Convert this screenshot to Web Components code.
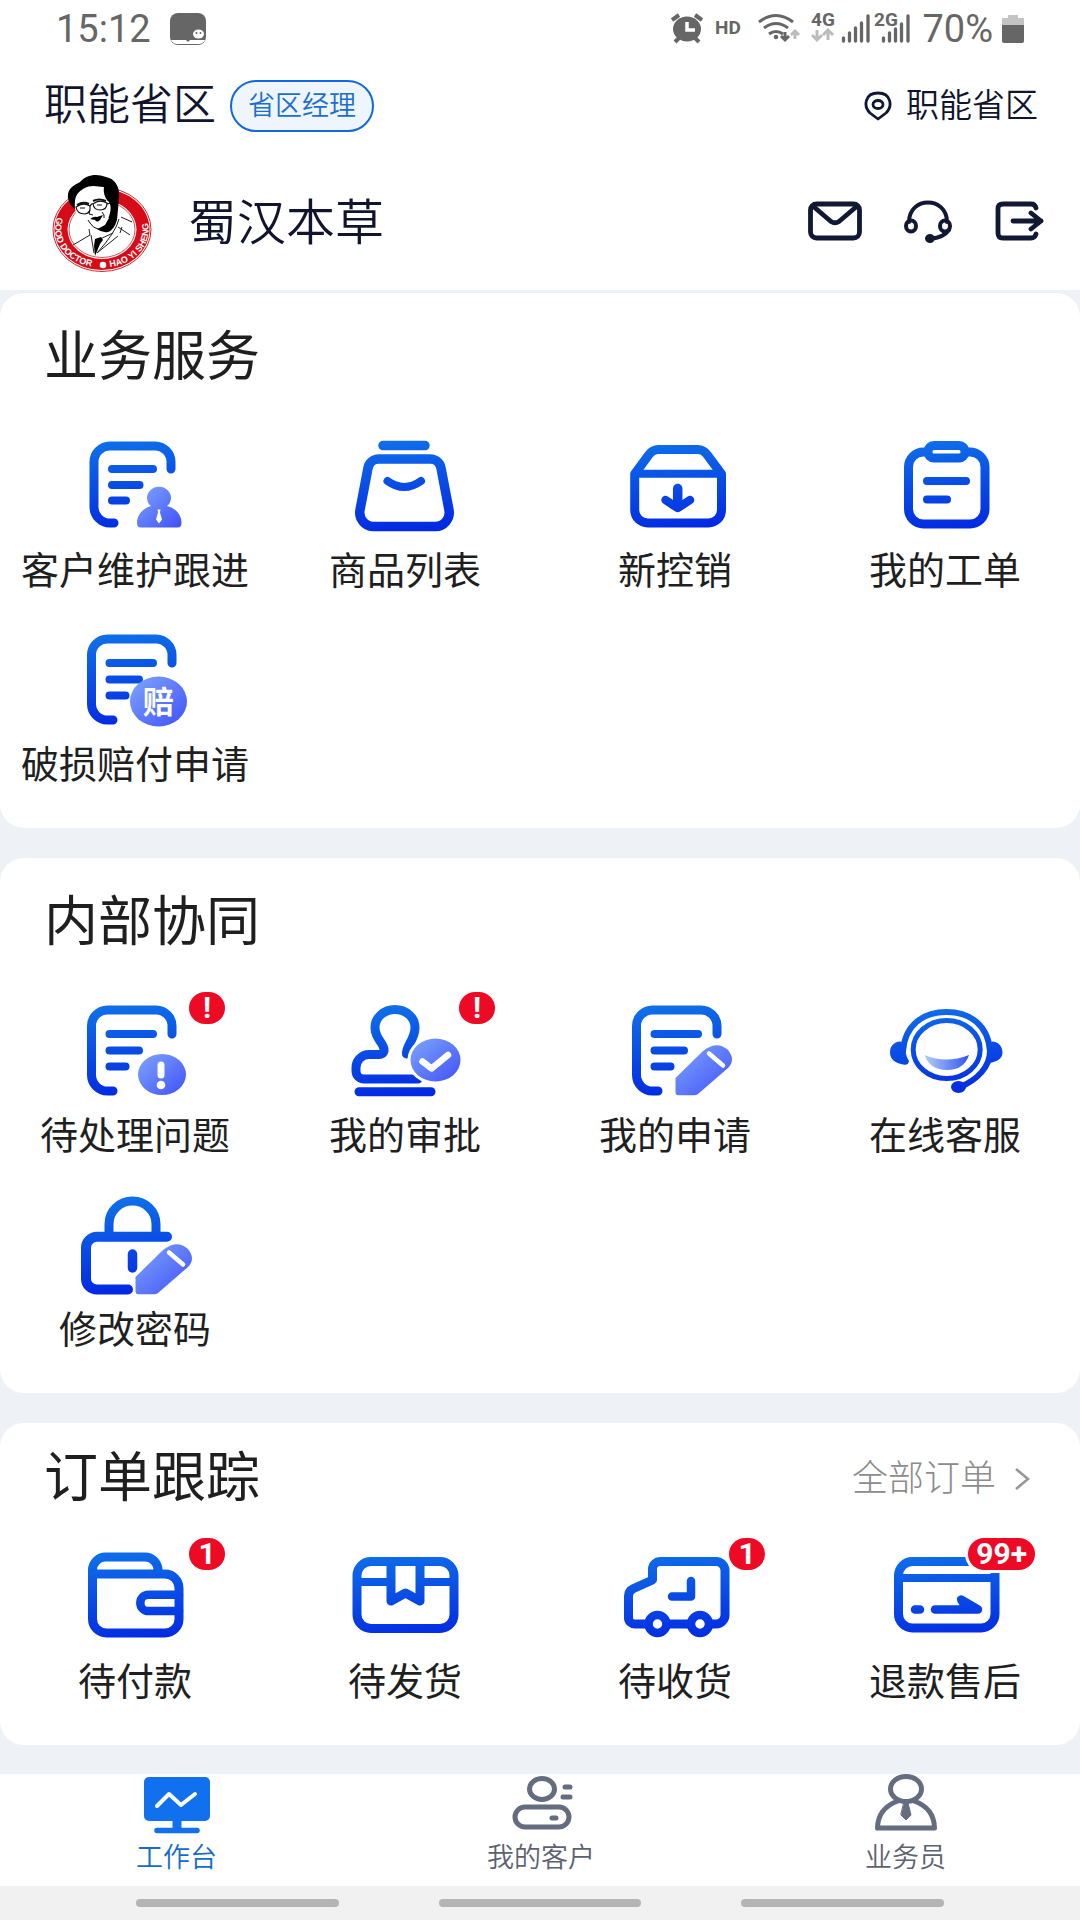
<!DOCTYPE html>
<html lang="zh-CN">
<head>
<meta charset="utf-8">
<meta name="viewport" content="width=device-width, initial-scale=1">
<title>工作台</title>
<style>
  body {
    margin: 0;
    min-height: 100vh;
    display: flex;
    flex-direction: column;
    background: #eef2f6;
    color: #1f1f1f;
    font-family: Roboto, "Noto Sans CJK SC", sans-serif;
  }
  main {
    flex-grow: 1;
    display: flex;
    flex-direction: column;
    gap: 30px;
    padding: 3px 0 29px;
  }
</style>
</head>
<body>
<status-bar></status-bar>
<page-header region="职能省区" role-name="省区经理" company="蜀汉本草"></page-header>
<main>
  <service-card heading="业务服务">
    <service-item icon="customer" label="客户维护跟进"></service-item>
    <service-item icon="bag" label="商品列表"></service-item>
    <service-item icon="box" label="新控销"></service-item>
    <service-item icon="clipboard" label="我的工单"></service-item>
    <service-item icon="damage" label="破损赔付申请"></service-item>
  </service-card>
  <service-card heading="内部协同">
    <service-item icon="issue" label="待处理问题" badge="!"></service-item>
    <service-item icon="stamp" label="我的审批" badge="!"></service-item>
    <service-item icon="apply" label="我的申请"></service-item>
    <service-item icon="service" label="在线客服"></service-item>
    <service-item icon="lock" label="修改密码"></service-item>
  </service-card>
  <service-card heading="订单跟踪" more="全部订单" compact>
    <service-item icon="wallet" label="待付款" badge="1"></service-item>
    <service-item icon="parcel" label="待发货"></service-item>
    <service-item icon="truck" label="待收货" badge="1"></service-item>
    <service-item icon="refund" label="退款售后" badge="99+"></service-item>
  </service-card>
</main>
<tab-bar>
  <tab-item icon="desk" label="工作台" active></tab-item>
  <tab-item icon="clients" label="我的客户"></tab-item>
  <tab-item icon="agent" label="业务员"></tab-item>
</tab-bar>
<gesture-bar></gesture-bar>

<script>
// the sheet of paper shared by several icons
const SHEET = `
  <path d="M97 33v-8a16 16 0 0 0-16-16H32.500a16 16 0 0 0-16 16v49a16 16 0 0 0 16 16H38" stroke-width="9"/>
  <path d="M34.500 33H78M34.500 49.500H64M34.500 65.500H50.500" stroke-width="8"/>`;

const PENCIL = `
  <path class="soft" d="M60.500 82 88 55Q102 44 113 54q8 10 0 18L83 98q-1.500 1.200-4 1.200H63.500q-3 0-3-3z"/>
  <path class="light" d="M94 57.500 108 69.500" stroke-width="4.500"/>`;

const ICONS = {
  customer: `
    <path d="M96 33v-7a16 16 0 0 0-16-16H35a16 16 0 0 0-16 16v45a16 16 0 0 0 16 16h4" stroke-width="9"/>
    <path d="M37 33H78M37 49H64.500M37 64.500H51" stroke-width="8"/>
    <path class="soft" d="M62 87c0-9 7-15 14-17a12 11 0 1 1 16 0c8 2 14.500 8 14.500 17q0 4.500-4 4.500H66q-4 0-4-4.500z"/>
    <path d="M82.500 73.500h3l-.5 3 2 7-3 4-3-4 2-7z" fill="#fff" stroke="none"/>`,
  bag: `
    <path d="M38 9.600H80" stroke-width="9.500"/>
    <path d="M34 23H85a11 11 0 0 1 11 9l8 42a14 14 0 0 1-14 16.500H28A14 14 0 0 1 15 74l8-42a11 11 0 0 1 11-9z" stroke-width="9.500"/>
    <path d="M42.500 45Q59 57 76 45" stroke-width="8"/>`,
  box: `
    <path d="M19.700 38V74a13 13 0 0 0 13 13H93.500a13 13 0 0 0 13-13V38L92 18.500q-4-5-9-5H43q-5 0-9 5z" stroke-width="9"/>
    <path d="M20 37.800H106" stroke-width="8"/>
    <path d="M62.700 52.500V70" stroke-width="9.500"/>
    <path d="M50.500 64 62.700 72 75 64" stroke-width="8.500"/>`,
  clipboard: `
    <rect x="23.500" y="16" width="76.500" height="72" rx="15" stroke-width="9"/>
    <rect x="43" y="9.500" width="37" height="12.500" rx="6" fill="#fff" stroke-width="9"/>
    <path d="M42 45H81M42 63.500H62" stroke-width="8"/>`,
  damage: `${SHEET}
    <ellipse class="soft" cx="83.500" cy="71.500" rx="28.500" ry="25"/>
    <text x="83.500" y="83" text-anchor="middle">赔</text>`,
  issue: `${SHEET}
    <ellipse class="soft" cx="87" cy="73.500" rx="24" ry="20.500"/>
    <path class="light" d="M86 64V74" stroke-width="7"/>
    <circle cx="86" cy="84" r="4.300" fill="#fff" stroke="none"/>`,
  stamp: `
    <path d="M61.500 53C61 44 70 39 70 26.500A20 18 0 0 0 30 26.500C30 39 40 42 39 50q-1 3.500-5 3.500H24a13 13 0 0 0-13 13V70a8 8 0 0 0 8 8H73" stroke-width="9"/>
    <path d="M14 90.700H86" stroke-width="9"/>
    <ellipse cx="90.500" cy="59" rx="28" ry="24.500" fill="#fff" stroke="none"/>
    <ellipse class="soft" cx="90.500" cy="59" rx="25" ry="21.500"/>
    <path class="light" d="M77.500 60.500 86.500 67.500 103 54" stroke-width="6.500"/>`,
  apply: `<g transform="translate(5 0)">${SHEET}</g><g transform="translate(0 -5)">${PENCIL}</g>`,
  service: `
    <ellipse cx="61.700" cy="48.500" rx="33.500" ry="29" stroke-width="5"/>
    <path d="M18 50C20 24 38 11 61.500 11S103 24 105 50C105 66 92 79 75 86" stroke-width="6"/>
    <path class="solid" d="M15 40.500 21 42Q19 53 24 60q-1 5-6 3.500C10 62 5 58 5 51.500S9 41 15 40.500zM108 40.500 102 42v20l5-.5C113 60 117.500 57 117.500 51.500S114 41 108 40.500z"/>
    <ellipse class="solid" cx="73.500" cy="86" rx="7.500" ry="6"/>
    <path class="smile" d="M39.500 54Q61 63 84 54 79 69 62 69T39.500 54z"/>`,
  lock: `
    <path d="M34 38V29a23.500 23 0 0 1 47 0V38" stroke-width="9"/>
    <path d="M92 41.700H22a11 11 0 0 0-11 11V84a11 10.500 0 0 0 11 10.500H53" stroke-width="10"/>
    <path d="M57.500 59V73" stroke-width="9.500"/>${PENCIL}`,
  wallet: `
    <path d="M17.500 27V72a14 14 0 0 0 14 14H90a14 14 0 0 0 14-14V41a14 14 0 0 0-14-14H17.500V23A13 13 0 0 1 30.500 10H70a13 13 0 0 1 13 13v4" stroke-width="9"/>
    <path d="M104 47.700H73.500a8.200 8.200 0 0 0 0 16.400H104" stroke-width="8.500"/>`,
  parcel: `
    <rect x="12" y="14.500" width="97" height="67" rx="14" stroke-width="9"/>
    <path d="M12 35H45M76 35H109" stroke-width="8"/>
    <path d="M46 16V54L60.500 46 75 54V16" stroke-width="9"/>`,
  truck: `
    <path d="M25 77H20a6.500 6 0 0 1-6.500-6V49q0-5 5-7.500L37.500 33V22a8 7.500 0 0 1 8-7.500H101a9 9 0 0 1 9 9V68a9 9 0 0 1-9 9z" stroke-width="9"/>
    <path d="M76 34V49.500H57" stroke-width="8.500"/>
    <circle cx="42.500" cy="77" r="9" fill="#fff" stroke-width="8.500"/>
    <circle cx="85" cy="77" r="9" fill="#fff" stroke-width="8.500"/>`,
  refund: `
    <path d="M96 14.500H27.500a14 14 0 0 0-14 14V67a14 14 0 0 0 14 14H96a14 14 0 0 0 14-14V25" stroke-width="9" stroke-linecap="butt"/>
    <path d="M14 31H106" stroke-width="8"/>
    <path d="M30 62.500h5M50 62.500H93L76 52.500 82 62" stroke-width="8.500"/>`
};

class ServiceItem extends HTMLElement {
  constructor() {
    super();
    this.attachShadow({ mode: 'open' });
  }

  connectedCallback() {
    const badge = this.getAttribute('badge');
    this.shadowRoot.innerHTML = `
<style>
  :host {
    display: block;
  }
  a {
    display: flex;
    flex-direction: column;
    align-items: center;
    gap: 9px;
    color: inherit;
    text-decoration: none;
  }
  .icon {
    position: relative;
    width: 120px;
    height: 104px;
  }
  svg {
    display: block;
    fill: none;
    stroke: url(#line);
    stroke-linecap: round;
    stroke-linejoin: round;
  }
  .soft {
    fill: url(#soft);
    stroke: none;
  }
  .smile {
    fill: url(#smile);
    stroke: none;
  }
  .solid {
    fill: url(#line);
    stroke: none;
  }
  .light {
    stroke: #fff;
  }
  text {
    fill: #fff;
    stroke: none;
    font: 700 31px "Noto Sans CJK SC", sans-serif;
  }
  .badge {
    position: absolute;
    top: -9px;
    right: -30px;
    box-sizing: border-box;
    min-width: 36px;
    height: 32px;
    padding: 0 8px;
    border-radius: 16px;
    background: #ee0a24;
    color: #fff;
    font-size: 30px;
    font-weight: 700;
    line-height: 32px;
    text-align: center;
  }
  .wide {
    box-shadow: 0 0 0 3px #fff;
  }
  .label {
    font-size: 38px;
    line-height: 44px;
    white-space: nowrap;
  }
</style>
<a href="#">
  <span class="icon">
    <svg width="120" height="104" viewBox="0 0 120 104" aria-hidden="true">
      <defs>
        <linearGradient id="line" gradientUnits="userSpaceOnUse" x1="50" y1="4" x2="60" y2="94">
          <stop offset="0" stop-color="#0f6fe9"/>
          <stop offset="1" stop-color="#032ae2"/>
        </linearGradient>
        <linearGradient id="soft" x1="0" y1="0" x2="1" y2="1">
          <stop offset="0" stop-color="#7fa6fc"/>
          <stop offset="1" stop-color="#3f50f8"/>
        </linearGradient>
        <linearGradient id="smile" x1="0" y1="0" x2="1" y2="0">
          <stop offset="0" stop-color="#b4ccfb"/>
          <stop offset="1" stop-color="#3156f0"/>
        </linearGradient>
      </defs>
      ${ICONS[this.getAttribute('icon')]}
    </svg>
    ${badge ? `<span class="badge ${badge.length > 1 ? 'wide' : ''}">${badge}</span>` : ''}
  </span>
  <span class="label">${this.getAttribute('label')}</span>
</a>`;
  }
}
customElements.define('service-item', ServiceItem);

class ServiceCard extends HTMLElement {
  constructor() {
    super();
    this.attachShadow({ mode: 'open' });
  }

  connectedCallback() {
    const more = this.getAttribute('more');
    this.shadowRoot.innerHTML = `
<style>
  :host {
    display: block;
    padding: 33px 0 41px;
    border-radius: 24px;
    background: #fff;
  }
  :host([compact]) {
    padding-top: 24px;
  }
  header {
    display: flex;
    align-items: center;
    justify-content: space-between;
    padding: 0 48px 0 44px;
    margin-bottom: 46px;
  }
  :host([compact]) header {
    margin-bottom: 36px;
  }
  h2 {
    margin: 0;
    font-size: 54px;
    font-weight: inherit;
    line-height: 64px;
  }
  a {
    display: flex;
    align-items: center;
    gap: 16px;
    color: #8c8c8c;
    font-size: 36px;
    font-weight: 300;
    line-height: 44px;
    text-decoration: none;
  }
  .grid {
    display: grid;
    grid-template-columns: repeat(4, 1fr);
    row-gap: 37px;
  }
</style>
<header>
  <h2>${this.getAttribute('heading')}</h2>
  ${more ? `<a href="#">${more}
    <svg width="20" height="24" viewBox="0 0 20 24" fill="none" stroke="#969696" stroke-width="2.500" aria-hidden="true"><path d="M4 2 16 12 4 22"/></svg>
  </a>` : ''}
</header>
<div class="grid"><slot></slot></div>`;
  }
}
customElements.define('service-card', ServiceCard);

class StatusBar extends HTMLElement {
  constructor() {
    super();
    this.attachShadow({ mode: 'open' }).innerHTML = `
<style>
  :host {
    display: flex;
    align-items: center;
    height: 58px;
    padding: 0 56px;
    background: #fff;
    color: #666;
    font-size: 38px;
    line-height: 42px;
  }
  .app {
    margin-left: 18px;
    flex-grow: 1;
  }
  .level {
    margin: 0 9px 0 11px;
  }
  text {
    font: 700 19px Roboto, sans-serif;
  }
  svg {
    display: block;
  }
</style>
<span>15:12</span>
<span class="app">
  <svg width="38" height="34" viewBox="0 0 38 34" aria-hidden="true">
    <rect x="1" y="1" width="36" height="32" rx="8" fill="#666"/>
    <path d="M2 28H36Q34 32 30 32H8Q4 32 2 28z" fill="#fff"/>
    <path d="M17 28h4l-2 2z" fill="#666"/>
    <ellipse cx="29.500" cy="22" rx="5.500" ry="4.500" fill="#fff"/>
    <circle cx="27.500" cy="21" r="1" fill="#666"/><circle cx="31.500" cy="21" r="1" fill="#666"/>
  </svg>
</span>
<svg width="240" height="46" viewBox="0 -6 240 46" fill="#666" stroke="#666" stroke-width="0" role="img" aria-label="HD 4G 2G">
  <ellipse cx="16" cy="17" rx="14" ry="12.500"/>
  <path d="M1 8 8 3M31 8 24 3M4 30 8 26M28 30 24 26" stroke-width="4"/>
  <path d="M16 10v8h8" fill="none" stroke="#fff" stroke-width="3.500"/>
  <text x="44" y="22">HD</text>
  <g fill="none" stroke-width="3">
    <path d="M88 10Q105-3 122 10M93 16Q105 7 117 16M98 22Q105 17 112 22"/>
    <path d="M114 20V27M110 24 114 28 118 24"/>
    <path d="M124 27V20M120 23 124 19 128 23" stroke="#bbb"/>
    <path d="M146 18V27M141 23 146 28 151 23M157 28V19M152 23 157 18 162 23" stroke="#bbb"/>
  </g>
  <circle cx="105" cy="25" r="2.300"/>
  <text x="140" y="14">4G</text>
  <text x="203" y="14">2G</text>
  <path d="M172.500 26v3M178.500 21v8M184.500 16v13M190.500 11v18M197 4v25M212.500 26v3M218.500 21v8M224.500 17v12M230.500 12v17M237 4v25" stroke-width="3.300" stroke-linecap="round"/>
</svg>
<span class="level">70%</span>
<svg width="22" height="30" viewBox="0 0 22 30" aria-hidden="true">
  <path d="M6 1H16V4H22V12H0V4H6z" fill="#c4c4c4"/>
  <path d="M0 11H22V27q0 2-2 2H2q-2 0-2-2z" fill="#666"/>
</svg>`;
  }
}
customElements.define('status-bar', StatusBar);

class BrandLogo extends HTMLElement {
  constructor() {
    super();
    this.attachShadow({ mode: 'open' }).innerHTML = `
<style>
  :host {
    display: block;
  }
  svg {
    display: block;
  }
  text {
    fill: #fff;
    font: 700 9px "Liberation Sans", sans-serif;
  }
</style>
<svg width="100" height="100" viewBox="0 0 100 100">
  <ellipse cx="50" cy="55.500" rx="49" ry="42" fill="#fff" stroke="#d3262c"/>
  <ellipse cx="50" cy="55.500" rx="47.500" ry="40.500" fill="#d60b17"/>
  <ellipse cx="50" cy="55.500" rx="34.500" ry="29.500" fill="#fff"/>
  <ellipse cx="50" cy="55.500" rx="33" ry="28" fill="#fff" stroke="#d3262c" stroke-width=".8"/>
  <path id="left" d="M5.500 43A45 38 0 0 0 44 93" fill="none"/>
  <path id="right" d="M58 93A45 38 0 0 0 94.500 44" fill="none"/>
  <text><textPath href="#left">GOOD DOCTOR</textPath></text>
  <text><textPath href="#right">HAO YI SHENG</textPath></text>
  <circle cx="51" cy="91" r="3.300" fill="#fff"/>
  <path d="M23 35Q17 31 16 24C15 16 20 12 28 8 34 1 44-1 54 3 64 5 68 14 67 24L65 46Q62 56 56 58 50 59 45 55L53 51 57 44z"/>
  <path d="M23 35C22 22 25 19 31 15 40 10 45 13 52 13 51 18 53 25 57 28 61 34 57 44 53 50Q49 54 45 54 37 51 35 45 24 43 23 35z" fill="#fff"/>
  <g fill="none" stroke="#111">
    <path d="M24 33Q31 28 38 32 39 39 33 40 25 40 24 33zM41 30Q47 25 55 29 55 36 48 36 42 36 41 30zM38 32Q40 29 41 30M55 30 59 29" stroke-width="1.200"/>
    <path d="M25 31Q31 27 37 30M41 27Q47 24 54 27" stroke-width="2"/>
    <path d="M28 34h5M45 31h5M38 36 37 40 41 41M50 38Q53 41 52 44M36 46 38 49Q41 54 46 55" stroke-width="1"/>
  </g>
  <path d="M38 45Q42 42 45 43L51 41 48 46Q45 49 43 46z"/>
  <g fill="none" stroke="#222">
    <path d="M37 55 38 61 21 71M39 61 42 79M67 45Q64 58 45 79M66 53 78 61M69 43 80 48M46 66 61 59M70 53 68 59M45 79 66 62"/>
  </g>
  <path d="M43 65 49 63 51 66 48 70 43 82 42 72z"/>
</svg>`;
  }
}
customElements.define('brand-logo', BrandLogo);

class PageHeader extends HTMLElement {
  constructor() {
    super();
    this.attachShadow({ mode: 'open' });
  }

  connectedCallback() {
    const region = this.getAttribute('region');
    this.shadowRoot.innerHTML = `
<style>
  :host {
    display: block;
    padding: 22px 36px 16px 44px;
    background: #fff;
    color: #10142d;
    font-weight: 350;
  }
  .row {
    display: flex;
    align-items: center;
  }
  .row + .row {
    margin-top: 42px;
    padding-left: 8px;
  }
  .region {
    font-size: 43px;
    line-height: 50px;
    margin-bottom: 2px;
  }
  .role {
    box-sizing: border-box;
    height: 52px;
    margin-left: 14px;
    padding: 0 16px;
    border: 2px solid #1268dc;
    border-radius: 26px;
    background: #eff5fd;
    color: #1b6fd0;
    font-size: 27px;
    line-height: 48px;
  }
  .place {
    display: flex;
    align-items: center;
    gap: 14px;
    margin: 0 6px 0 auto;
    font-size: 33px;
    line-height: 44px;
  }
  .company {
    flex-grow: 1;
    margin-left: 36px;
    font-size: 49px;
    line-height: 58px;
  }
  nav {
    display: flex;
    gap: 41px;
    margin-bottom: 4px;
  }
  button {
    padding: 0;
    border: 0;
    background: none;
    cursor: pointer;
  }
  svg {
    display: block;
    fill: none;
    stroke: #111833;
    stroke-linecap: round;
    stroke-linejoin: round;
  }
</style>
<div class="row">
  <span class="region">${region}</span>
  <span class="role">${this.getAttribute('role-name')}</span>
  <span class="place">
    <svg width="28" height="30" viewBox="0 0 28 30" stroke-width="2.800" aria-hidden="true">
      <path d="M14 28 6 22C-1 15 1 2 14 2S29 15 22 22z"/>
      <ellipse cx="14" cy="13.500" rx="5" ry="4"/>
    </svg>
    ${region}
  </span>
</div>
<div class="row">
  <brand-logo></brand-logo>
  <span class="company">${this.getAttribute('company')}</span>
  <nav>
    <button aria-label="消息">
      <svg width="54" height="44" viewBox="0 0 54 44" stroke-width="4.800">
        <rect x="2.500" y="4" width="49" height="34" rx="6"/>
        <path d="M6 7 23 21.500Q27 24 31 21.500L48 7"/>
      </svg>
    </button>
    <button aria-label="客服">
      <svg width="50" height="44" viewBox="0 0 50 44" stroke-width="4">
        <path d="M6 22C6 -4 44 -4 44 22"/>
        <ellipse cx="8" cy="26" rx="5" ry="5.500"/>
        <ellipse cx="42" cy="26" rx="5" ry="5.500"/>
        <path d="M46 30Q40 38 28 38.500"/>
        <ellipse cx="27" cy="38.500" rx="3" ry="2.500" fill="#111833"/>
      </svg>
    </button>
    <button aria-label="退出">
      <svg width="50" height="44" viewBox="0 0 50 44" stroke-width="4.800">
        <path d="M42 8Q41 4 37 4H9Q4 4 4 9V33Q4 38 9 38H37Q41 38 42 34"/>
        <path d="M19 21H47M37 13 47 21 37 29"/>
      </svg>
    </button>
  </nav>
</div>`;
  }
}
customElements.define('page-header', PageHeader);

const TAB_ICONS = {
  desk: `
    <rect x="1" y="3" width="66" height="44" rx="5" fill="#1170ee"/>
    <path d="M14 32 26 20 38 31 52 20" stroke="#fff" stroke-width="4"/>
    <path d="M34 47V56" stroke="#1170ee" stroke-width="9" stroke-linecap="butt"/>
    <path d="M14 56.500H54" stroke="#1170ee" stroke-width="5.500"/>`,
  clients: `
    <g stroke="#646d80" stroke-width="5">
      <ellipse cx="35" cy="15" rx="12.500" ry="10.500"/>
      <rect x="8" y="33" width="54" height="20" rx="10"/>
      <path d="M58 13H63M56 23H63M45 44H49"/>
    </g>`,
  agent: `
    <g stroke="#646d80" stroke-width="5">
      <ellipse cx="34" cy="15" rx="15.500" ry="12.500"/>
      <path d="M26 27Q6 34 5.500 54H62.500Q62 34 42 27"/>
      <path d="M32 29h4l3 12-5 5-5-5z" fill="#646d80" stroke-width="1"/>
    </g>`
};

class TabItem extends HTMLElement {
  constructor() {
    super();
    this.attachShadow({ mode: 'open' });
  }

  connectedCallback() {
    this.shadowRoot.innerHTML = `
<style>
  :host {
    display: block;
    color: #5c6270;
  }
  :host([active]) {
    color: #146cc8;
  }
  a {
    display: flex;
    flex-direction: column;
    align-items: center;
    gap: 6px;
    color: inherit;
    font-size: 27px;
    font-weight: 350;
    line-height: 36px;
    text-decoration: none;
  }
  svg {
    display: block;
    fill: none;
    stroke-linecap: round;
    stroke-linejoin: round;
  }
</style>
<a href="#">
  <svg width="68" height="60" viewBox="0 0 68 60" aria-hidden="true">${TAB_ICONS[this.getAttribute('icon')]}</svg>
  ${this.getAttribute('label')}
</a>`;
  }
}
customElements.define('tab-item', TabItem);

class TabBar extends HTMLElement {
  constructor() {
    super();
    this.attachShadow({ mode: 'open' }).innerHTML = `
<style>
  :host {
    display: flex;
    justify-content: space-between;
    padding: 0 134px 10px 136px;
    background: #fff;
  }
</style>
<slot></slot>`;
  }
}
customElements.define('tab-bar', TabBar);

class GestureBar extends HTMLElement {
  constructor() {
    super();
    this.attachShadow({ mode: 'open' }).innerHTML = `
<style>
  :host {
    display: flex;
    justify-content: space-between;
    gap: 100px;
    padding: 13px 136px;
    background: #f1f1f1;
  }
  span {
    flex: 1;
    height: 8px;
    border-radius: 4px;
    background: #b4b4b4;
  }
</style>
<span></span><span></span><span></span>`;
  }
}
customElements.define('gesture-bar', GestureBar);
</script>
</body>
</html>
